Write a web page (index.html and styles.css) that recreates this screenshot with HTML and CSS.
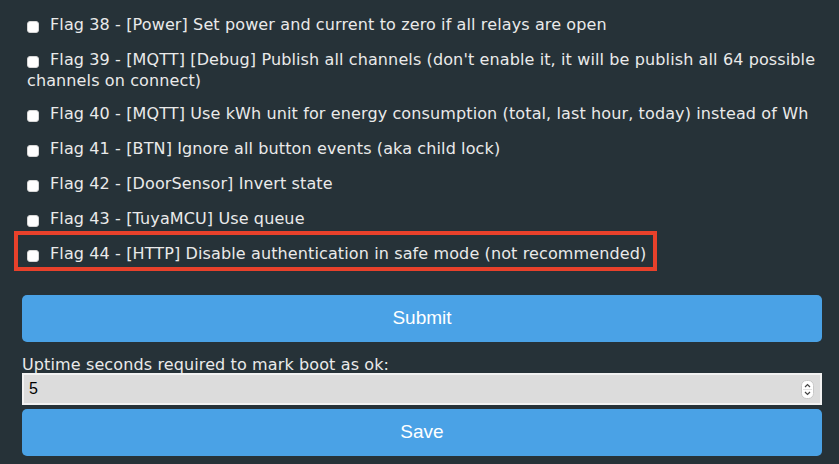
FILE: index.html
```html
<!DOCTYPE html>
<html lang="en">
<head>
<meta charset="utf-8">
<title>Flags</title>
<link rel="stylesheet" href="styles.css">
</head>
<body>
<div class="page">
  <form class="form">
    <div class="flags">
      <label class="flag"><input type="checkbox" class="cb">Flag 37 - [WiFi] Quick connect to WiFi on reboot (TODO: check if it works for you and report on github)</label>
      <label class="flag"><input type="checkbox" class="cb">Flag 38 - [Power] Set power and current to zero if all relays are open</label>
      <label class="flag"><input type="checkbox" class="cb">Flag 39 - [MQTT] [Debug] Publish all channels (don't enable it, it will be publish all 64 possible channels on connect)</label>
      <label class="flag"><input type="checkbox" class="cb">Flag 40 - [MQTT] Use kWh unit for energy consumption (total, last hour, today) instead of Wh</label>
      <label class="flag"><input type="checkbox" class="cb">Flag 41 - [BTN] Ignore all button events (aka child lock)</label>
      <label class="flag"><input type="checkbox" class="cb">Flag 42 - [DoorSensor] Invert state</label>
      <label class="flag"><input type="checkbox" class="cb">Flag 43 - [TuyaMCU] Use queue</label>
      <label class="flag flag-hl"><input type="checkbox" class="cb">Flag 44 - [HTTP] Disable authentication in safe mode (not recommended)</label>
    </div>
    <button type="button" class="btn btn-submit">Submit</button>
  </form>
  <form class="form">
    <label class="field-label" for="uptime">Uptime seconds required to mark boot as ok:</label>
    <div class="num">
      <input id="uptime" class="num-input" type="text" value="5">
      <svg class="spin" width="13" height="19" viewBox="0 0 13 19" aria-hidden="true">
        <rect x="0.5" y="0.5" width="12" height="18" rx="5" fill="#ffffff" stroke="#c8c8c8"/>
        <line x1="2" y1="9.5" x2="11" y2="9.5" stroke="#e2e2e2"/>
        <path d="M4 7 L6.5 4.5 L9 7" fill="none" stroke="#444" stroke-width="1.2"/>
        <path d="M4 12 L6.5 14.5 L9 12" fill="none" stroke="#444" stroke-width="1.2"/>
      </svg>
    </div>
    <button type="button" class="btn btn-save">Save</button>
  </form>
</div>
</body>
</html>
```

FILE: styles.css
```css
html, body {
  margin: 0;
  padding: 0;
}

body {
  background: #263238;
  color: #eaeaea;
  font-family: "DejaVu Sans", Verdana, sans-serif;
  font-size: 16px;
  letter-spacing: 0.12px;
  overflow: hidden;
}

.page {
  width: 800px;
  padding: 0 17px 0 22px;
}

.form {
  display: flex;
  flex-direction: column;
}

.flags {
  display: flex;
  flex-direction: column;
  gap: 13.3px;
  padding: 0 4px 0 5px;
  margin-top: -40px;
}

.flag {
  display: block;
  line-height: 20px;
}

.cb {
  appearance: none;
  -webkit-appearance: none;
  display: inline-block;
  width: 12px;
  height: 12px;
  margin: 3px 11px 3.5px 0;
  vertical-align: -6.5px;
  background: #ffffff;
  border: 1px solid #d6d6d6;
  border-radius: 3px;
  box-sizing: border-box;
}

.flag-hl {
  position: relative;
}

.flag-hl::after {
  content: "";
  position: absolute;
  left: -13px;
  top: -12.5px;
  width: 643px;
  height: 40px;
  border: 4.5px solid #e8412b;
  box-sizing: border-box;
  pointer-events: none;
}

.btn {
  display: block;
  width: 100%;
  height: 47px;
  border: 0;
  border-radius: 5px;
  background: #4aa2e6;
  color: #ffffff;
  font-family: "Liberation Sans", Arial, sans-serif;
  font-size: 19px;
  letter-spacing: 0;
  padding: 0;
}

.btn-submit {
  margin-top: 29.5px;
}

.field-label {
  display: block;
  margin-top: 13px;
  line-height: 19px;
}

.num {
  position: relative;
  margin-top: -1px;
}

.num-input {
  display: block;
  width: 100%;
  height: 32px;
  box-sizing: border-box;
  margin: 0;
  padding: 0 0 0 5px;
  background: #dcdcdc;
  border: 2px solid #f2f2f2;
  color: #000000;
  font-family: "Liberation Sans", Arial, sans-serif;
  font-size: 16px;
  letter-spacing: 0;
  outline: none;
}

.spin {
  position: absolute;
  right: 8px;
  top: 7px;
}

.btn-save {
  margin-top: 4px;
}
```
